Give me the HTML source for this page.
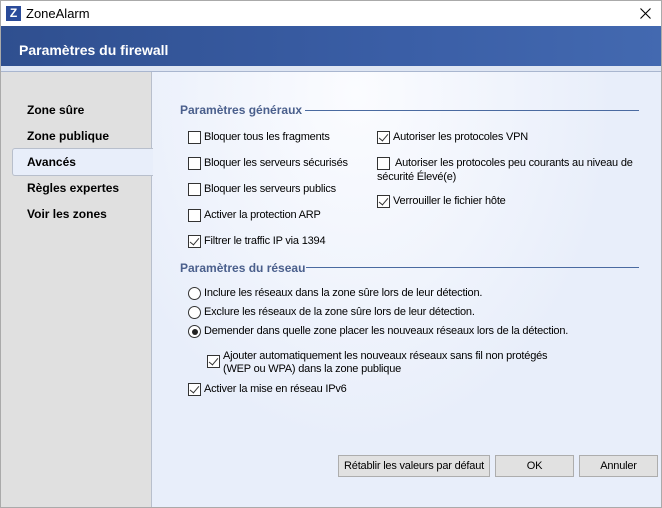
<!DOCTYPE html><html><head><style>
*{margin:0;padding:0;box-sizing:border-box}
body{width:662px;height:508px;overflow:hidden;font-family:"Liberation Sans",sans-serif;font-size:11px;letter-spacing:-0.2px;color:#000;background:#fff;position:relative}
.win{position:absolute;left:0;top:0;width:662px;height:508px;border:1px solid #aaa}
.title{position:absolute;left:1px;top:1px;width:660px;height:25px;background:#fff}
.logo{position:absolute;left:5px;top:5px;width:15px;height:15px;background:#2a4b9a;color:#fff;font-weight:bold;font-size:12px;line-height:15px;text-align:center}
.ttext{position:absolute;left:25px;top:5px;font-size:13px;letter-spacing:0}
.close{position:absolute;left:639px;top:7px}
.head{position:absolute;left:1px;top:26px;width:660px;height:40px;background:linear-gradient(90deg,#2f4f8f,#3a5ea6 60%,#4369b0)}
.head span{position:absolute;left:18px;top:16px;color:#fff;font-weight:bold;font-size:14px;letter-spacing:0}
.strip{position:absolute;left:1px;top:66px;width:660px;height:6px;background:#dfe6f3;border-bottom:1px solid #a9b6cf}
.side{position:absolute;left:1px;top:72px;width:151px;height:435px;background:#e0e0e0;border-right:1px solid #b8bfcc}
.content{position:absolute;left:152px;top:72px;width:509px;height:435px;background:radial-gradient(ellipse at 40% 5%,#fbfcff,#e8eefa 60%)}
.nav{position:absolute;left:27px;font-weight:bold;font-size:12px;letter-spacing:0}
.tab{position:absolute;left:12px;top:148px;width:141px;height:28px;background:#e8eefa;border:1px solid #b8bfcc;border-right:none;border-radius:3px 0 0 3px}
.grp{position:absolute;color:#4a5f8c;font-weight:bold;font-size:12px;letter-spacing:0}
.line{position:absolute;height:1px;background:#4a6aa0}
.cb{position:absolute;width:13px;height:13px;border:1px solid #333;background:#fff}
.cb.c::after{content:"";position:absolute;left:3px;top:0px;width:4px;height:8px;border:solid #333;border-width:0 1.5px 1.5px 0;transform:rotate(40deg)}
.rb{position:absolute;width:13px;height:13px;border:1px solid #333;border-radius:50%;background:#fff}
.rb.c::after{content:"";position:absolute;left:2.5px;top:2.5px;width:6px;height:6px;border-radius:50%;background:#222}
.t{position:absolute;white-space:nowrap}
.btn{position:absolute;top:455px;height:22px;background:#e1e1e1;border:1px solid #adadad;text-align:center;line-height:20px;white-space:nowrap}
</style></head><body>
<div class="win"></div>
<div class="title"><div class="logo">Z</div><div class="ttext">ZoneAlarm</div><svg class="close" width="11" height="11"><path d="M0.5 0.5L10.5 10.5M10.5 0.5L0.5 10.5" stroke="#000" stroke-width="1.1"/></svg></div>
<div class="head"><span>Paramètres du firewall</span></div>
<div class="strip"></div>
<div class="side"></div>
<div class="content"></div>
<div class="tab"></div>
<div class="nav" style="top:103px">Zone sûre</div>
<div class="nav" style="top:129px">Zone publique</div>
<div class="nav" style="top:155px">Avancés</div>
<div class="nav" style="top:181px">Règles expertes</div>
<div class="nav" style="top:207px">Voir les zones</div>

<div class="grp" style="left:180px;top:103px">Paramètres généraux</div>
<div class="line" style="left:305px;top:110px;width:334px"></div>
<div class="cb" style="left:188px;top:131px"></div><div class="t" style="left:204px;top:131px">Bloquer tous les fragments</div>
<div class="cb" style="left:188px;top:157px"></div><div class="t" style="left:204px;top:157px">Bloquer les serveurs sécurisés</div>
<div class="cb" style="left:188px;top:183px"></div><div class="t" style="left:204px;top:183px">Bloquer les serveurs publics</div>
<div class="cb" style="left:188px;top:209px"></div><div class="t" style="left:204px;top:209px">Activer la protection ARP</div>
<div class="cb c" style="left:188px;top:235px"></div><div class="t" style="left:204px;top:235px">Filtrer le traffic IP via 1394</div>
<div class="cb c" style="left:377px;top:131px"></div><div class="t" style="left:393px;top:131px">Autoriser les protocoles VPN</div>
<div class="cb" style="left:377px;top:157px"></div><div class="t" style="left:395px;top:157px">Autoriser les protocoles peu courants au niveau de</div>
<div class="t" style="left:377px;top:171px">sécurité Élevé(e)</div>
<div class="cb c" style="left:377px;top:195px"></div><div class="t" style="left:393px;top:195px">Verrouiller le fichier hôte</div>

<div class="grp" style="left:180px;top:261px">Paramètres du réseau</div>
<div class="line" style="left:306px;top:267px;width:333px"></div>
<div class="rb" style="left:188px;top:287px"></div><div class="t" style="left:204px;top:287px">Inclure les réseaux dans la zone sûre lors de leur détection.</div>
<div class="rb" style="left:188px;top:306px"></div><div class="t" style="left:204px;top:306px">Exclure les réseaux de la zone sûre lors de leur détection.</div>
<div class="rb c" style="left:188px;top:325px"></div><div class="t" style="left:204px;top:325px">Demender dans quelle zone placer les nouveaux réseaux lors de la détection.</div>
<div class="cb c" style="left:207px;top:355px"></div><div class="t" style="left:223px;top:350px">Ajouter automatiquement les nouveaux réseaux sans fil non protégés</div>
<div class="t" style="left:223px;top:363px">(WEP ou WPA) dans la zone publique</div>
<div class="cb c" style="left:188px;top:383px"></div><div class="t" style="left:204px;top:383px">Activer la mise en réseau IPv6</div>

<div class="btn" style="left:338px;width:152px">Rétablir les valeurs par défaut</div>
<div class="btn" style="left:495px;width:79px">OK</div>
<div class="btn" style="left:579px;width:79px">Annuler</div>
</body></html>
